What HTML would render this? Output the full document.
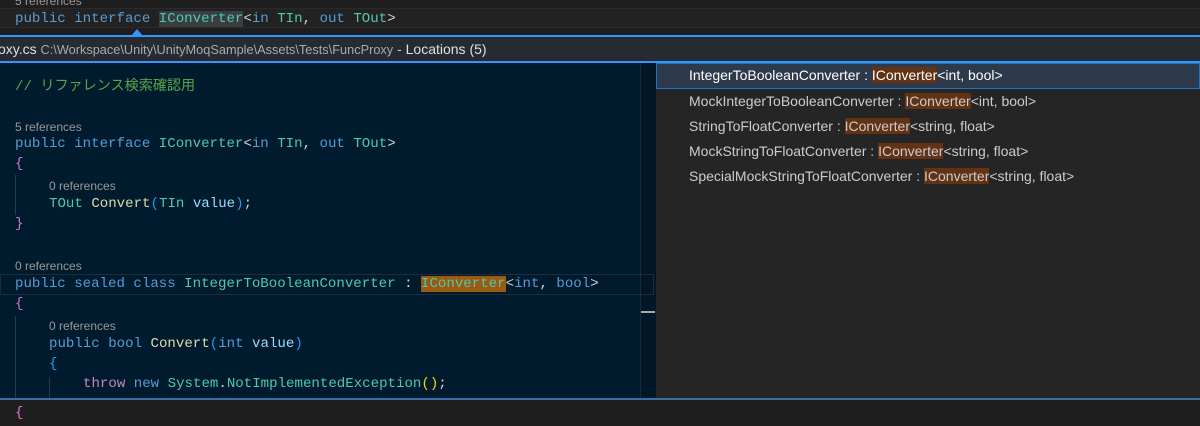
<!DOCTYPE html><html><head><style>
*{margin:0;padding:0;box-sizing:border-box}
body{width:1200px;height:426px;overflow:hidden;background:#1e1e1e;position:relative;font-family:"Liberation Mono",monospace;}
.a{position:absolute;white-space:pre}
.c{font-size:14.1px;color:#9cdcfe}
.k{color:#569cd6}.t{color:#4ec9b0}.y{color:#dcdcaa}.p{color:#da70d6}.b{color:#179fff}.g{color:#57a64a}.w{color:#d4d4d4}.cb{color:#ffd700}.pk{color:#c586c0}
.r{font-family:"Liberation Sans",sans-serif;font-size:12px;color:#999}
.s{font-family:"Liberation Sans",sans-serif;font-size:14px;color:#ccc}
.h{background:#613214}
</style></head><body>
<div class="a" style="left:0;top:0;width:1200px;height:36px;background:#1e1e1e"></div>
<div class="a" style="left:0;top:8px;width:1200px;height:20px;background:#222;border-top:1px solid #2a2a2a;border-bottom:1px solid #2a2a2a"></div>
<div class="a r" style="left:15px;top:-6px">5 references</div>
<div class="a c k" style="left:15px;top:11px">public interface <span class="t" style="background:#3a3d41">IConverter</span><span class="w">&lt;</span>in <span class="t">TIn</span><span class="w">,</span> out <span class="t">TOut</span><span class="w">&gt;</span></div>
<div class="a" style="left:131px;top:29px;width:0;height:0;border-left:6px solid transparent;border-right:6px solid transparent;border-bottom:7px solid #3794ff"></div>
<div class="a" style="left:0;top:35px;width:1200px;height:2px;background:#3794ff"></div>
<div class="a" style="left:0;top:37px;width:1200px;height:25px;background:#262a31"></div>
<div class="a" style="left:0;top:61px;width:1200px;height:2px;background:#3794ff"></div>
<div class="a" style="left:-2px;top:41px;font-family:'Liberation Sans',sans-serif;font-size:14px;color:#e0e0e0">oxy.cs <span style="font-size:12.75px;color:#aaa">C:\Workspace\Unity\UnityMoqSample\Assets\Tests\FuncProxy</span> <span style="color:#ccc">-</span> Locations (5)</div>
<div class="a" style="left:0;top:63px;width:656px;height:335px;background:#001b2d"></div>
<div class="a" style="left:640px;top:63px;width:16px;height:335px;background:#011727;border-left:1px solid #1a2a3a"></div>
<div class="a" style="left:641px;top:311px;width:14px;height:2px;background:#aaa"></div>
<div class="a" style="left:0;top:274px;width:654px;height:21px;border:1px solid #1f2c3a"></div>
<div class="a c g" style="left:15px;top:75px;font-family:'Liberation Mono','Noto Sans CJK JP',monospace">// リファレンス検索確認用</div>
<div class="a r" style="left:15px;top:120px">5 references</div>
<div class="a c k" style="left:15px;top:136px">public interface <span class="t">IConverter</span><span class="w">&lt;</span>in <span class="t">TIn</span><span class="w">,</span> out <span class="t">TOut</span><span class="w">&gt;</span></div>
<div class="a c p" style="left:15px;top:156px">{</div>
<div class="a r" style="left:49px;top:179px">0 references</div>
<div class="a c" style="left:49px;top:196px"><span class="t">TOut</span> <span class="y">Convert</span><span class="b">(</span><span class="t">TIn</span> value<span class="b">)</span><span class="w">;</span></div>
<div class="a c p" style="left:15px;top:216px">}</div>
<div class="a" style="left:15px;top:175px;width:1px;height:40px;background:#2a3a4a"></div>
<div class="a r" style="left:15px;top:259px">0 references</div>
<div class="a c k" style="left:15px;top:276px">public sealed class <span class="t">IntegerToBooleanConverter</span> <span class="w">:</span> <span class="t" style="background:#9a5b10">IConverter</span><span class="w">&lt;</span>int<span class="w">,</span> bool<span class="w">&gt;</span></div>
<div class="a c p" style="left:15px;top:296px">{</div>
<div class="a r" style="left:49px;top:319px">0 references</div>
<div class="a c k" style="left:49px;top:336px">public bool <span class="y">Convert</span><span class="b">(</span>int <span style="color:#9cdcfe">value</span><span class="b">)</span></div>
<div class="a c b" style="left:49px;top:356px">{</div>
<div class="a c" style="left:83px;top:376px"><span class="pk">throw</span> <span class="k">new</span> <span class="t">System</span><span class="w">.</span><span class="t">NotImplementedException</span><span class="cb">()</span><span class="w">;</span></div>
<div class="a" style="left:15px;top:316px;width:1px;height:82px;background:#2a3a4a"></div>
<div class="a" style="left:49px;top:377px;width:1px;height:21px;background:#2a3a4a"></div>
<div class="a" style="left:656px;top:63px;width:544px;height:335px;background:#252526"></div>
<div class="a" style="left:656px;top:63px;width:544px;height:26px;background:#2c3a4c;border:1px solid #1f73c4"></div>
<div class="a s" style="left:689px;top:67px;color:#fff">IntegerToBooleanConverter : <span class="h">IConverter</span>&lt;int, bool&gt;</div>
<div class="a s" style="left:689px;top:93px">MockIntegerToBooleanConverter : <span class="h">IConverter</span>&lt;int, bool&gt;</div>
<div class="a s" style="left:689px;top:118px">StringToFloatConverter : <span class="h">IConverter</span>&lt;string, float&gt;</div>
<div class="a s" style="left:689px;top:143px">MockStringToFloatConverter : <span class="h">IConverter</span>&lt;string, float&gt;</div>
<div class="a s" style="left:689px;top:168px">SpecialMockStringToFloatConverter : <span class="h">IConverter</span>&lt;string, float&gt;</div>
<div class="a" style="left:0;top:398px;width:1200px;height:2px;background:#3a6ea5"></div>
<div class="a c p" style="left:15px;top:405px">{</div>
</body></html>
